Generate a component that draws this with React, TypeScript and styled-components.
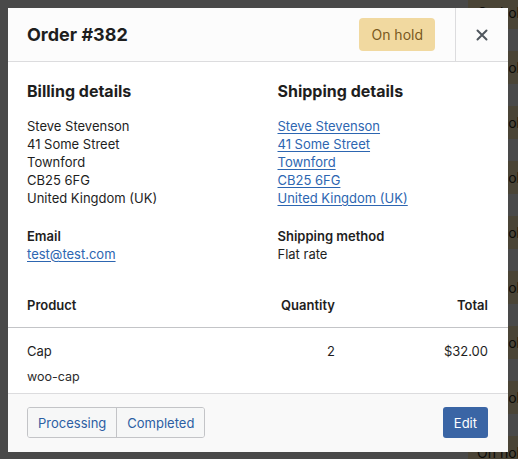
import React from "react";
import styled, { createGlobalStyle } from "styled-components";

const Global = createGlobalStyle`
  * { box-sizing: border-box; }
  html, body { margin: 0; padding: 0; }
  body {
    font-family: Inter, "Noto Sans", "Liberation Sans", sans-serif;
    background: #fff;
    color: #1e1e1e;
    -webkit-font-smoothing: antialiased;
  }
`;

const Page = styled.div`
  width: 518px;
  height: 459px;
  overflow: hidden;
  position: relative;
  background: #f3f3f4;
`;

const BackList = styled.div`
  display: flex;
  flex-direction: column;
  gap: 22px;
  padding-left: 468px;
  margin-top: -4px;
`;

const BackBadge = styled.div`
  height: 33px;
  width: 90px;
  background: #f8e4b6;
  color: #2a2518;
  font-size: 14px;
  line-height: 33px;
  padding-left: 9px;
  white-space: nowrap;
`;

const Overlay = styled.div`
  position: absolute;
  inset: 0;
  background: rgba(0, 0, 0, 0.7);
`;

const Modal = styled.div`
  position: absolute;
  left: 8px;
  top: 8px;
  width: 500px;
  height: 444px;
  background: #fff;
  display: flex;
  flex-direction: column;
  overflow: hidden;
`;

const Header = styled.header`
  display: flex;
  align-items: center;
  height: 54px;
  background: #fcfcfc;
  border-bottom: 1px solid #dcdcde;
  flex-shrink: 0;
`;

const Title = styled.h1`
  flex: 1;
  margin: 0;
  padding-left: 19px;
  font-size: 18px;
  font-weight: 700;
  color: #1e1e1e;
`;

const Badge = styled.span`
  height: 33px;
  display: inline-flex;
  align-items: center;
  padding: 0 12px;
  border-radius: 4px;
  background: #f1d9a0;
  color: #7a5a1e;
  font-size: 14px;
  margin-right: 20px;
`;

const CloseButton = styled.button`
  width: 53px;
  height: 53px;
  border: 0;
  border-left: 1px solid #dcdcde;
  background: transparent;
  display: flex;
  align-items: center;
  justify-content: center;
  padding: 0;
  cursor: pointer;
`;

const Body = styled.div`
  flex: 1;
  padding: 19px 20px 0 19px;
  overflow: hidden;
`;

const Columns = styled.div`
  display: grid;
  grid-template-columns: 1fr 1fr;
  column-gap: 40px;
`;

const Column = styled.div``;

const SectionTitle = styled.h2`
  margin: 0 0 16px;
  font-size: 16px;
  line-height: 20px;
  font-weight: 700;
  color: #1e1e1e;
`;

const Address = styled.address`
  font-style: normal;
  font-size: 13px;
  line-height: 18px;
  color: #1e1e1e;
  display: flex;
  flex-direction: column;
  align-items: flex-start;
`;

const Link = styled.a`
  color: #2d66b1;
  text-decoration: underline;
  text-underline-offset: 2px;
`;

const Label = styled.div`
  margin-top: 20px;
  font-size: 13px;
  line-height: 18px;
  font-weight: 600;
  color: #1e1e1e;
`;

const Value = styled.div`
  font-size: 13px;
  line-height: 18px;
  color: #1e1e1e;
`;

const Table = styled.table`
  width: calc(100% + 39px);
  margin: 33px -20px 0 -19px;
  border-collapse: collapse;
`;

const Th = styled.th<{ $align?: string; $w?: string }>`
  text-align: ${(p) => p.$align || "left"};
  font-size: 13px;
  line-height: 18px;
  font-weight: 600;
  color: #1e1e1e;
  padding: 0 0 13px;
  border-bottom: 1px solid #c3c4c7;
  width: ${(p) => p.$w || "auto"};
  &:first-child { padding-left: 19px; }
  &:last-child { padding-right: 20px; }
`;

const Td = styled.td<{ $align?: string }>`
  text-align: ${(p) => p.$align || "left"};
  font-size: 13px;
  line-height: 18px;
  color: #1e1e1e;
  padding: 14px 0 0;
  vertical-align: top;
  &:first-child { padding-left: 19px; }
  &:last-child { padding-right: 20px; }
`;

const Sku = styled.div`
  margin-top: 8px;
  font-size: 12.5px;
  line-height: 18px;
  color: #2c2c2c;
`;

const Footer = styled.footer`
  flex-shrink: 0;
  height: 59px;
  border-top: 1px solid #dcdcde;
  background: #f9f9f9;
  display: flex;
  align-items: center;
  justify-content: space-between;
  padding: 0 20px 1px 19px;
`;

const Group = styled.div`
  display: flex;
  border: 1px solid #c3c4c7;
  border-radius: 3px;
  overflow: hidden;
`;

const GroupButton = styled.button`
  height: 29px;
  border: 0;
  background: #f6f7f7;
  color: #2c5ea3;
  font-family: inherit;
  font-size: 13px;
  padding: 0 10px;
  cursor: pointer;
  & + & { border-left: 1px solid #c3c4c7; }
`;

const PrimaryButton = styled.button`
  height: 31px;
  border: 0;
  border-radius: 3px;
  background: #3a65a5;
  color: #fff;
  font-family: inherit;
  font-size: 13px;
  padding: 0 11px;
  cursor: pointer;
`;

const addr = ["Steve Stevenson", "41 Some Street", "Townford", "CB25 6FG", "United Kingdom (UK)"];

export default function App() {
  return (
    <>
      <Global />
      <Page>
        <BackList>
          {Array.from({ length: 9 }).map((_, i) => (
            <BackBadge key={i}>On hold</BackBadge>
          ))}
        </BackList>
        <Overlay />
        <Modal>
          <Header>
            <Title>Order #382</Title>
            <Badge>On hold</Badge>
            <CloseButton aria-label="Close">
              <svg width="12" height="12" viewBox="0 0 12 12">
                <path d="M1.5 1.5 L10.5 10.5 M10.5 1.5 L1.5 10.5" stroke="#50575e" strokeWidth="2" strokeLinecap="round" />
              </svg>
            </CloseButton>
          </Header>
          <Body>
            <Columns>
              <Column>
                <SectionTitle>Billing details</SectionTitle>
                <Address>
                  {addr.map((l) => (
                    <span key={l}>{l}</span>
                  ))}
                </Address>
                <Label>Email</Label>
                <Value>
                  <Link href="#">test@test.com</Link>
                </Value>
              </Column>
              <Column>
                <SectionTitle>Shipping details</SectionTitle>
                <Address>
                  {addr.map((l) => (
                    <Link key={l} href="#">
                      {l}
                    </Link>
                  ))}
                </Address>
                <Label>Shipping method</Label>
                <Value>Flat rate</Value>
              </Column>
            </Columns>
            <Table>
              <thead>
                <tr>
                  <Th>Product</Th>
                  <Th $align="right" $w="120px">Quantity</Th>
                  <Th $align="right" $w="173px">Total</Th>
                </tr>
              </thead>
              <tbody>
                <tr>
                  <Td>
                    Cap
                    <Sku>woo-cap</Sku>
                  </Td>
                  <Td $align="right">2</Td>
                  <Td $align="right">$32.00</Td>
                </tr>
              </tbody>
            </Table>
          </Body>
          <Footer>
            <Group>
              <GroupButton>Processing</GroupButton>
              <GroupButton>Completed</GroupButton>
            </Group>
            <PrimaryButton>Edit</PrimaryButton>
          </Footer>
        </Modal>
      </Page>
    </>
  );
}
